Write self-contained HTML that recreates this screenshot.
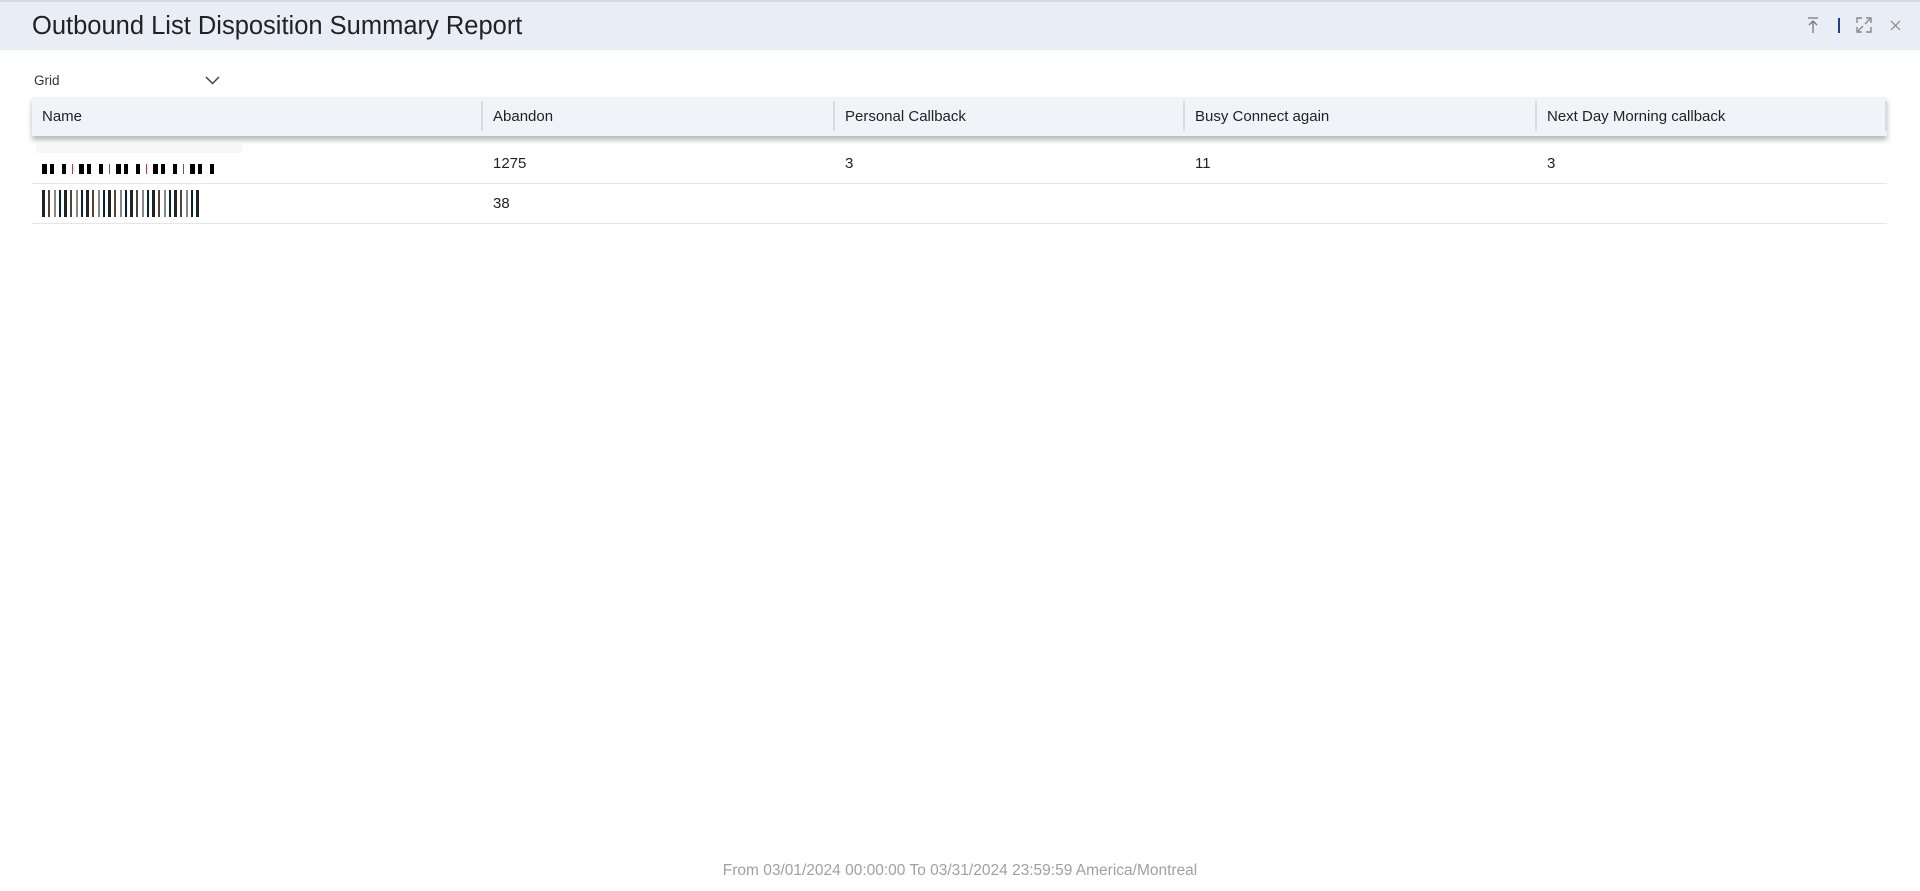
<!DOCTYPE html>
<html><head><style>
*{margin:0;padding:0;box-sizing:border-box}
body{width:1920px;height:891px;background:#fff;font-family:"Liberation Sans",sans-serif;position:relative;overflow:hidden;color:#222}
.tb{position:absolute;left:0;top:0;width:1920px;height:50px;background:#e9edf5;border-top:2px solid #d6d9de}
.title{position:absolute;left:32px;top:10px;font-size:25.5px;color:#222}
.ic{position:absolute;top:14px}
.grid{position:absolute;left:34px;top:73px;font-size:13.5px;color:#333}
.hdr{position:absolute;left:32px;top:97px;width:1855px;height:39px;background:#f0f3f8;box-shadow:0 4px 5px rgba(0,0,0,.28)}
.h{position:absolute;top:0;height:39px;line-height:39px;font-size:15px;color:#222}
.sep{position:absolute;top:4px;width:2px;height:30px;background:#d8dbe0}
.row{position:absolute;left:32px;width:1855px;border-bottom:1px solid #e4e6eb}
.c{position:absolute;font-size:15px}
.bars1{position:absolute;left:42px;top:164px;width:178px;height:10px;background:repeating-linear-gradient(90deg,#000 0 5px,#fff 5px 8px,#000 8px 12px,#fff 12px 20px,#000 20px 24px,#fff 24px 30px,#a44 30px 31px,#fff 31px 37px)}
.bars2{position:absolute;left:42px;top:190px;width:158px;height:27px;background:repeating-linear-gradient(90deg,#222 0 3px,#fff 3px 6px,#543 6px 8px,#fff 8px 12px,#888 12px 14px,#fff 14px 17px,#024 17px 19px,#fff 19px 22px)}
.foot{position:absolute;top:862px;left:0;width:1920px;text-align:center;font-size:15.5px;color:#a0a0a0}
</style></head><body>
<div class="tb"><div class="title">Outbound List Disposition Summary Report</div>
<svg class="ic" style="left:1806px" width="14" height="18" viewBox="0 0 14 18"><path d="M2 2h10M7 5v12M3 9l4-4 4 4" stroke="#777" stroke-width="1.3" fill="none"/></svg>
<div class="ic" style="left:1838px;top:16px;width:2px;height:15px;background:#1a3f9a"></div>
<svg class="ic" style="left:1855px" width="18" height="18" viewBox="0 0 18 18"><path d="M2 7V2h5M11 2h5v5M16 11v5h-5M7 16H2v-5M10 8l5-5M8 10l-5 5" stroke="#888" stroke-width="1.4" fill="none"/></svg>
<svg class="ic" style="left:1890px;top:18px" width="11" height="11" viewBox="0 0 11 11"><path d="M1 1l9 9M10 1l-9 9" stroke="#888" stroke-width="1.2"/></svg>
</div>
<div class="grid">Grid</div>
<svg style="position:absolute;left:205px;top:76px" width="15" height="9" viewBox="0 0 15 9"><path d="M1 1l6.5 6.5L14 1" stroke="#444" stroke-width="1.5" fill="none"/></svg>
<div class="row" style="top:143px;height:41px"></div>
<div class="row" style="top:184px;height:40px"></div>
<div class="hdr">
<div class="h" style="left:10px">Name</div>
<div class="sep" style="left:449px"></div><div class="h" style="left:461px">Abandon</div>
<div class="sep" style="left:801px"></div><div class="h" style="left:813px">Personal Callback</div>
<div class="sep" style="left:1151px"></div><div class="h" style="left:1163px">Busy Connect again</div>
<div class="sep" style="left:1503px"></div><div class="h" style="left:1515px">Next Day Morning callback</div>
<div class="sep" style="left:1853px"></div>
</div>
<div style="position:absolute;left:36px;top:143px;width:206px;height:10px;background:#f6f7f9"></div>
<div class="bars1"></div><div class="bars2"></div>
<div class="c" style="left:493px;top:155px">1275</div>
<div class="c" style="left:845px;top:155px">3</div>
<div class="c" style="left:1195px;top:155px">11</div>
<div class="c" style="left:1547px;top:155px">3</div>
<div class="c" style="left:493px;top:195px">38</div>
<div class="foot">From 03/01/2024 00:00:00 To 03/31/2024 23:59:59 America/Montreal</div>
</body></html>
